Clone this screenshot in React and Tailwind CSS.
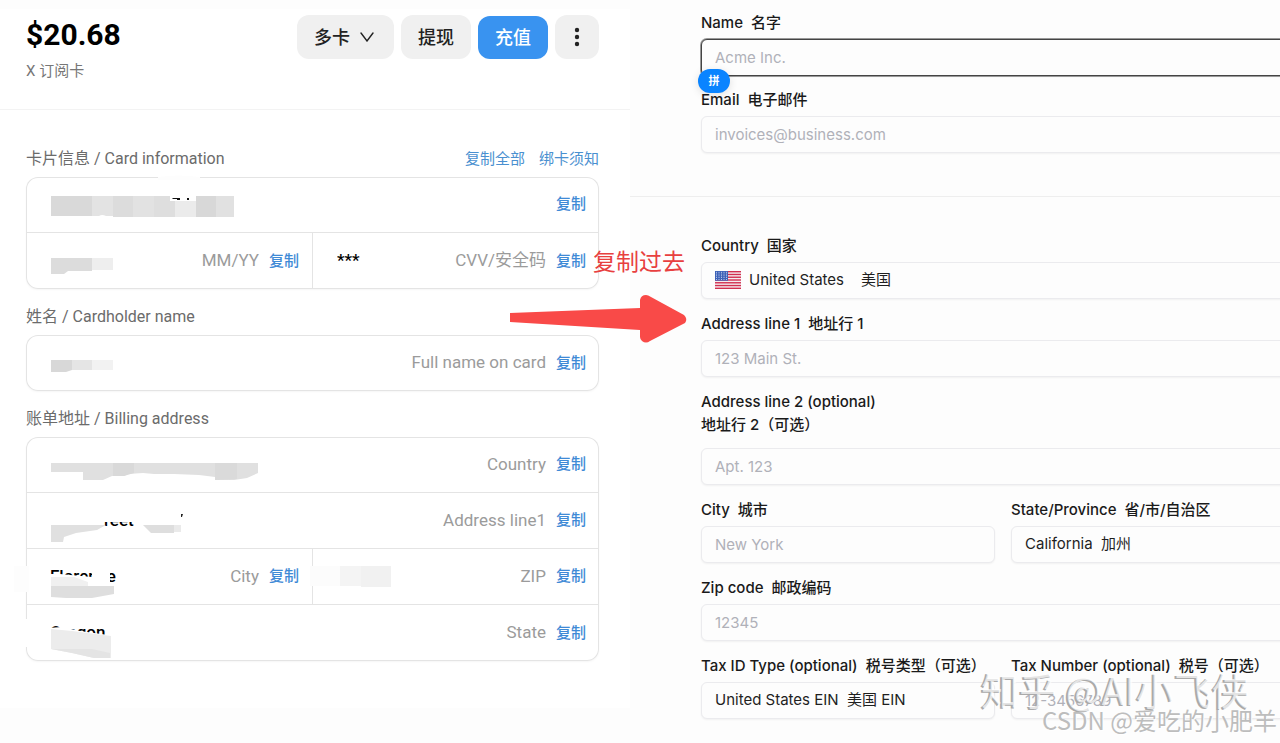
const leftFont = "font-['Roboto','Noto_Sans_CJK_SC',sans-serif]";
const rightFont = "font-['Inter','Noto_Sans_CJK_SC',sans-serif]";

const stars = [0, 1, 2, 3, 4];

function Mask({ children }) {
  return (
    <svg
      className="absolute left-0 top-0 overflow-visible pointer-events-none"
      width="240"
      height="56"
      aria-hidden="true"
    >
      {children}
    </svg>
  );
}

function Cell({ id, label, value = "", inputClass = "", className = "", mask }) {
  return (
    <div
      className={`relative flex h-14 flex-1 min-w-0 items-center pl-6 pr-[13px] ${className}`}
    >
      <input
        id={id}
        aria-label={label ? undefined : "卡号"}
        type="text"
        defaultValue={value}
        className={`w-0 min-w-0 flex-1 bg-transparent text-[17px] font-medium text-black outline-none ${inputClass}`}
      />
      {mask && <Mask>{mask}</Mask>}
      {label && (
        <label htmlFor={id} className="text-[17px] text-[#9b9b9b]">
          {label}
        </label>
      )}
      <button
        type="button"
        className="ml-[10px] text-[15px] font-medium text-[#3f8ad6]"
      >
        复制
      </button>
    </div>
  );
}

function Box({ children }) {
  return (
    <div className="rounded-xl inset-ring inset-ring-[#e4e4e4] shadow-[0_1px_2px_rgba(0,0,0,0.04)]">
      {children}
    </div>
  );
}

function Heading({ children }) {
  return <h2 className="text-base leading-6 text-[#6b6b6b]">{children}</h2>;
}

function CardPanel() {
  return (
    <section
      className={`relative mt-[9px] h-fit bg-white pb-[47px] ${leftFont}`}
    >
      <header className="flex items-start justify-between border-b border-[#f3f3f3] pl-[26px] pr-[31px] pt-[6px] pb-[26px]">
        <div>
          <p className="text-[30px] font-bold leading-10 text-black">$20.68</p>
          <p className="mt-1 text-[15px] leading-6 text-[#777]">X 订阅卡</p>
        </div>
        <div className="flex items-center gap-[7px] text-[18px] font-medium text-[#222]">
          <button
            type="button"
            className="flex h-11 items-center gap-[10px] rounded-xl bg-[#f0f0f0] pl-[17px] pr-5"
          >
            多卡
            <svg
              width="14"
              height="10"
              fill="none"
              stroke="#222"
              strokeWidth="1.4"
              strokeLinecap="round"
            >
              <path d="M1 1L7 9L13 1" />
            </svg>
          </button>
          <button type="button" className="h-11 rounded-xl bg-[#f0f0f0] px-[17px]">
            提现
          </button>
          <button
            type="button"
            className="h-[43px] rounded-xl bg-[#3993f0] px-[17px] text-white"
          >
            充值
          </button>
          <button
            type="button"
            aria-label="更多"
            className="flex h-11 w-11 items-center justify-center rounded-xl bg-[#f0f0f0]"
          >
            <svg width="6" height="20" fill="#222">
              <circle cx="3" cy="3" r="2.2" />
              <circle cx="3" cy="10" r="2.2" />
              <circle cx="3" cy="17" r="2.2" />
            </svg>
          </button>
        </div>
      </header>

      <div className="pl-[26px] pr-[31px] pt-[37px]">
        <div className="mb-[6px] flex items-center justify-between">
          <Heading>卡片信息 / Card information</Heading>
          <div className="flex gap-[14px] text-[15px] leading-6 text-[#4a90d0]">
            <button type="button">复制全部</button>
            <a href="#notice">绑卡须知</a>
          </div>
        </div>
        <Box>
          <Cell
            id="number"
            className="border-b border-[#e4e4e4]"
            mask={
              <>
                <path d="M132 0Q152 -3 174 0V3H132Z" fill="#fdfdfd" />
                <rect x="25" y="19" width="41" height="20" fill="#d9d9d9" />
                <rect x="66" y="19" width="21" height="20" fill="#e3e3e3" />
                <rect x="87" y="19" width="20" height="21" fill="#dcdcdc" />
                <rect x="107" y="19" width="21" height="21" fill="#e2e2e2" />
                <rect x="128" y="19" width="21" height="21" fill="#dedede" />
                <rect x="149" y="22" width="21" height="18" fill="#ebebeb" />
                <rect x="170" y="19" width="20" height="21" fill="#d8d8d8" />
                <rect x="190" y="19" width="18" height="21" fill="#e1e1e1" />
                <path d="M144 19H170V24H144Z" fill="#fff" />
                <path d="M73 39q3-2 7 0z" fill="#fff" />
                <path d="M147 21h7v2h-3v-1h-5zM161 21h2v2h-2z" fill="#111" />
              </>
            }
          />
          <div className="flex">
            <Cell
              id="expiry"
              label="MM/YY"
              className="border-r border-[#e4e4e4]"
              mask={
                <>
                  <path d="M25 25H66V38H42L38 41H25Z" fill="#dcdcdc" />
                  <rect x="66" y="25" width="21" height="12" fill="#eee" />
                </>
              }
            />
            <Cell id="cvv" label="CVV/安全码" value="***" />
          </div>
        </Box>

        <div className="mb-[6px] mt-4">
          <Heading>姓名 / Cardholder name</Heading>
        </div>
        <Box>
          <Cell
            id="holder"
            label="Full name on card"
            mask={
              <>
                <path d="M25 25H46V35L40 37H25Z" fill="#d8d8d8" />
                <rect x="46" y="25" width="20" height="10" fill="#e5e5e5" />
                <rect x="66" y="25" width="21" height="10" fill="#f2f2f2" />
              </>
            }
          />
        </Box>

        <div className="mb-[6px] mt-4">
          <Heading>账单地址 / Billing address</Heading>
        </div>
        <Box>
          <Cell
            id="country"
            label="Country"
            className="border-b border-[#e4e4e4]"
            mask={
              <>
                <path
                  d="M25 26H232V36L221 41L208 43H189V40L173 38L148 37H128L117 36L102 37L98 39H86L77 43H57V35H25Z"
                  fill="#e0e0e0"
                />
                <path d="M87 26H108V36L98 39H87Z" fill="#d9d9d9" />
                <path d="M189 26H211V42L189 43Z" fill="#dadada" />
              </>
            }
          />
          <Cell
            id="line1"
            label="Address line1"
            value="reet"
            inputClass="indent-[54px]"
            className="border-b border-[#e4e4e4]"
            mask={
              <>
                <rect x="24" y="14" width="100" height="15" fill="#fff" />
                <path
                  d="M25 32H80L71 37L50 40L38 44L37 49H25Z"
                  fill="#e0e0e0"
                />
                <path d="M117 32H148V40H125Z" fill="#dedede" />
                <rect x="148" y="32" width="7" height="7" fill="#eaeaea" />
                <path d="M155 21h2l-1 3h-1z" fill="#222" />
              </>
            }
          />
          <div className="flex">
            <Cell
              id="city"
              label="City"
              value="Florence"
              className="border-r border-b border-[#e4e4e4]"
              mask={
                <>
                  <rect x="-12" y="17" width="15" height="26" fill="#fdfdfd" />
                  <path d="M22 25H34L66 28V20H84V33L80 38H22Z" fill="#fff" />
                  <path d="M25 28H48L62 33V37H25Z" fill="#f0f0f0" />
                  <path
                    d="M25 37H88V45L66 49H40L25 48Z"
                    fill="#dedede"
                  />
                </>
              }
            />
            <Cell
              id="zip"
              label="ZIP"
              className="border-b border-[#e4e4e4]"
              mask={
                <>
                  <rect x="-3" y="17" width="30" height="20" fill="#fcfcfc" />
                  <rect x="27" y="17" width="21" height="20" fill="#f4f4f4" />
                  <rect x="48" y="17" width="30" height="21" fill="#f1f1f1" />
                </>
              }
            />
          </div>
          <Cell
            id="state"
            label="State"
            value="Oregon"
            mask={
              <>
                <rect x="-3" y="14" width="10" height="28" fill="#fff" />
                <path d="M22 23L36 22L54 26L82 30V40H22Z" fill="#fff" />
                <path d="M25 24L46 26L85 31V53H68L46 48L25 44Z" fill="#ececec" />
                <path d="M25 44H66L84 48V53H68L46 48Z" fill="#e4e4e4" />
              </>
            }
          />
        </Box>
      </div>

      {/* annotation pointing at the billing form */}
      <p className="absolute -right-[55px] top-[236px] z-10 text-[23px] leading-9 text-[#e84040]">
        复制过去
      </p>
      <svg
        className="absolute -right-[58px] top-[286px] z-10"
        width="178"
        height="49"
        aria-hidden="true"
      >
        <path
          d="M0 27V18L130 13V5Q131 0 136 0Q138 0 141 2L174 20Q178 24 175 28L140 46Q136 49 132 46Q130 44 130 42V35Z"
          fill="#f94a48"
        />
      </svg>
    </section>
  );
}

function Field({ id, label, children, className = "" }) {
  return (
    <div className={className}>
      <label
        htmlFor={id}
        className="mb-[5px] block whitespace-pre text-[15px] font-medium leading-[23px] text-[#1a1a1a]"
      >
        {label}
      </label>
      {children}
    </div>
  );
}

const control =
  "block h-[37px] w-full appearance-none rounded-md border border-[#ebebee] bg-[#fdfdfd] px-[13px] text-[15px] text-[#1f1f1f] shadow-[0_1px_2px_rgba(0,0,0,0.05)] outline-none placeholder:text-[#b0b1b9]";

function Flag() {
  return (
    <svg
      className="absolute left-[14px] top-[9px]"
      width="26"
      height="18"
      viewBox="0 0 26 18"
      aria-hidden="true"
    >
      <rect width="26" height="18" fill="#f4eef0" />
      {[0, 2, 4, 6, 8, 10, 12].map((n) => (
        <rect key={n} y={(n * 18) / 13} width="26" height="1.4" fill="#d22f50" />
      ))}
      <rect width="13" height="9.7" fill="#3d62b8" />
      {stars.map((r) =>
        stars.map((c) => (
          <circle
            key={`${r}-${c}`}
            cx={1.5 + c * 2.5}
            cy={1.2 + r * 1.8}
            r="0.5"
            fill="#dfe5f5"
          />
        ))
      )}
    </svg>
  );
}

function BillingForm() {
  return (
    <section className={`min-w-0 overflow-hidden ${rightFont}`}>
      <form className="min-w-[675px]">
        <div className="grid gap-3 border-b border-[#eeeeee] pl-[71px] pt-[11px] pb-[43px]">
          <Field id="name" label="Name  名字">
            <div className="relative">
              <input
                id="name"
                type="text"
                placeholder="Acme Inc."
                className={`${control} border-[#444]! ring-1 ring-[#999]`}
              />
              {/* pinyin input method bubble */}
              <span className="absolute -left-[3px] top-[30px] flex h-6 w-8 items-center justify-center rounded-full bg-[#0a84ff] text-[11px] font-bold text-white shadow-[0_2px_8px_rgba(0,0,0,0.12)]">
                拼
              </span>
            </div>
          </Field>
          <Field id="email" label="Email  电子邮件">
            <input
              id="email"
              type="email"
              placeholder="invoices@business.com"
              className={control}
            />
          </Field>
        </div>

        <div className="grid grid-cols-2 gap-x-4 gap-y-[13px] pl-[71px] pt-[37px]">
          <Field id="bill-country" label="Country  国家" className="col-span-2">
            <div className="relative">
              <select id="bill-country" className={`${control} pl-[47px]!`}>
                <option>{"United States\u00a0\u00a0\u00a0\u00a0美国"}</option>
              </select>
              <Flag />
            </div>
          </Field>
          <Field id="addr1" label="Address line 1  地址行 1" className="col-span-2">
            <input
              id="addr1"
              type="text"
              placeholder="123 Main St."
              className={control}
            />
          </Field>
          <Field
            id="addr2"
            label={"Address line 2 (optional)\n地址行 2（可选）"}
            className="col-span-2"
          >
            <input
              id="addr2"
              type="text"
              placeholder="Apt. 123"
              className={`${control} mt-3`}
            />
          </Field>
          <Field id="bill-city" label="City  城市">
            <input
              id="bill-city"
              type="text"
              placeholder="New York"
              className={control}
            />
          </Field>
          <Field id="province" label="State/Province  省/市/自治区">
            <select id="province" className={control}>
              <option>{"California\u00a0\u00a0加州"}</option>
            </select>
          </Field>
          <Field id="bill-zip" label="Zip code  邮政编码" className="col-span-2">
            <input
              id="bill-zip"
              type="text"
              placeholder="12345"
              className={control}
            />
          </Field>
          <Field id="tax-type" label="Tax ID Type (optional)  税号类型（可选）">
            <select id="tax-type" className={control}>
              <option>{"United States EIN\u00a0\u00a0美国 EIN"}</option>
            </select>
          </Field>
          <Field id="tax-number" label="Tax Number (optional)  税号（可选）">
            <input
              id="tax-number"
              type="text"
              placeholder="12-3456789"
              className={control}
            />
          </Field>
        </div>
      </form>
    </section>
  );
}

function App() {
  return (
    <div className="relative grid min-h-screen grid-cols-[630fr_650fr] overflow-hidden bg-[#fdfdfd]">
      <CardPanel />
      <BillingForm />

      <p className="pointer-events-none absolute right-[30px] bottom-[30px] whitespace-nowrap font-['Noto_Sans_CJK_SC',sans-serif] text-[38px] leading-[48px] text-white/70 [text-shadow:-2px_1px_0_#aaa]">
        知乎 @AI小飞侠
      </p>
      <p className="pointer-events-none absolute right-[3px] bottom-[7px] whitespace-nowrap font-['Noto_Sans_CJK_SC',sans-serif] text-[24px] leading-8 text-[#bdbdbd] [text-shadow:1px_1px_0_#fff]">
        CSDN @爱吃的小肥羊
      </p>
    </div>
  );
}

export default App;
